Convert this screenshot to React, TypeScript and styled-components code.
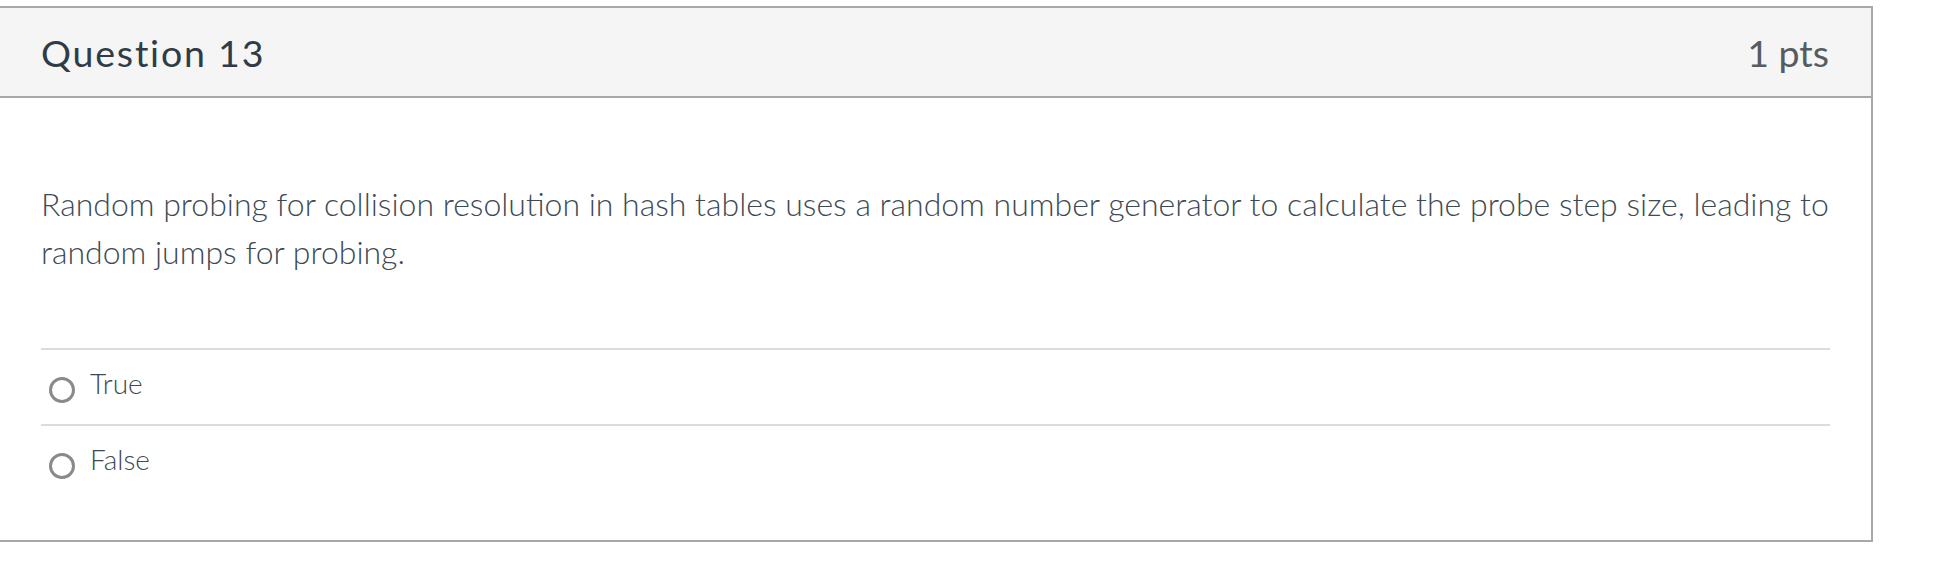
import styled, { createGlobalStyle } from 'styled-components';

const GlobalStyle = createGlobalStyle`
  html, body {
    margin: 0;
    padding: 0;
    background: #ffffff;
  }

  body {
    font-family: Lato, "Open Sans", "Liberation Sans", sans-serif;
    color: #2d3b45;
  }
`;

const Card = styled.div`
  width: 1871px;
  margin-top: 6px;
  border: 2px solid #a8a8a8;
  border-left: none;
  background: #ffffff;
`;

const Header = styled.div`
  display: flex;
  align-items: center;
  justify-content: space-between;
  height: 88px;
  padding: 0 42px 0 41px;
  background: #f5f5f5;
  border-bottom: 2px solid #a8a8a8;
`;

const Title = styled.h2`
  margin: 0;
  font-size: 37.5px;
  font-weight: 400;
  letter-spacing: 1.8px;
  color: #2f3c46;
`;

const Points = styled.div`
  font-size: 37.5px;
  font-weight: 400;
  color: #555c61;
`;

const Body = styled.div`
  padding: 82px 41px 40px 41px;
`;

const QuestionText = styled.p`
  margin: 0 0 72px 0;
  font-family: "Lato Light", Lato, "Open Sans", sans-serif;
  font-size: 32px;
  line-height: 48px;
  font-weight: 300;
  color: #3e4a53;
`;

const Answers = styled.div`
  display: flex;
  flex-direction: column;
`;

const Answer = styled.label`
  display: flex;
  align-items: center;
  gap: 15px;
  height: 74px;
  padding-left: 8px;
  border-top: 2px solid #dcdcdc;
  cursor: pointer;
`;

const Radio = styled.input.attrs({ type: 'radio' })`
  appearance: none;
  box-sizing: border-box;
  margin: 6px 0 0 0;
  width: 26px;
  height: 26px;
  border: 3px solid #8a8a8a;
  border-radius: 50%;
  background: #ffffff;
  flex-shrink: 0;
`;

const AnswerText = styled.span`
  margin-bottom: 8px;
  font-family: "Lato Light", Lato, "Open Sans", sans-serif;
  font-size: 28px;
  font-weight: 300;
  color: #3e4a53;
`;

const answers = ['True', 'False'];

export default function App() {
  return (
    <>
      <GlobalStyle />
      <Card>
        <Header>
          <Title>Question 13</Title>
          <Points>1 pts</Points>
        </Header>
        <Body>
          <QuestionText>
            Random probing for collision resolution in hash tables uses a random number generator to
            calculate the probe step size, leading to random jumps for probing.
          </QuestionText>
          <Answers>
            {answers.map((answer) => (
              <Answer key={answer}>
                <Radio name="question-13" />
                <AnswerText>{answer}</AnswerText>
              </Answer>
            ))}
          </Answers>
        </Body>
      </Card>
    </>
  );
}
